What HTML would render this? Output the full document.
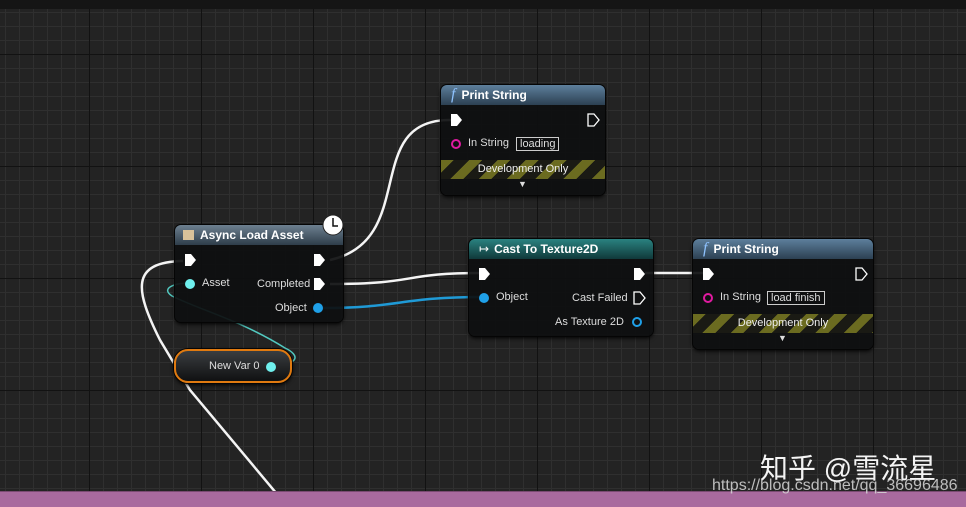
<!DOCTYPE html><html><head><meta charset="utf-8"><style>
body{margin:0;width:966px;height:506px;overflow:hidden;position:relative;font-family:"Liberation Sans",sans-serif;
background-color:#232323;
background-image:
linear-gradient(90deg,#121212 1px,transparent 1px),
linear-gradient(0deg,#121212 1px,transparent 1px),
linear-gradient(90deg,#2f2f2f 1px,transparent 1px),
linear-gradient(0deg,#2f2f2f 1px,transparent 1px);
background-size:112px 112px,112px 112px,14px 14px,14px 14px;
background-position:89px 55px,89px 55px,5px 55px,5px 55px;}
.top{position:absolute;left:0;top:0;width:966px;height:9px;background:#151515}
.pink{position:absolute;left:0;top:491px;width:966px;height:15px;background:#a86a9e;border-top:1px solid #7a4a72}
.node{position:absolute;background:rgba(14,15,16,.93);border-radius:6px;box-shadow:0 0 0 1px #050505,0 2px 4px #000;color:#ddd;font-size:11px}
.hd{height:20px;border-radius:6px 6px 0 0;color:#fff;font-weight:bold;font-size:12px;line-height:20px;padding-left:10px}
.hd i{font-size:16px;font-weight:normal}
.t{position:absolute;white-space:nowrap}
.stripe{position:absolute;left:0;right:0;height:19px;background:repeating-linear-gradient(135deg,#6b6b20 0 9px,#1a1a14 9px 20px);color:#eee;text-align:center;line-height:19px;font-size:11px}
.box{border:1px solid #ccc;padding:0 3px;font-size:11px}
</style></head><body>
<div class="top"></div>
<svg width="966" height="506" style="position:absolute;left:0;top:0">
<g fill="none" stroke-width="2.5">
<path d="M183 261 C130 262 135 290 160 340 L190 390 L287 506" stroke="#f4f4f4"/>
<path d="M330 260 C420 240 360 118 452 120" stroke="#f4f4f4"/>
<path d="M330 284 C420 284 400 273 482 273" stroke="#f4f4f4"/>
<path d="M645 273 L705 273" stroke="#f4f4f4"/>
<path d="M322 308 C400 308 400 297 482 297" stroke="#1f9ad6"/>
<path d="M272 365 C300 365 300 355 285 348 C240 320 200 310 172 296 C160 288 175 283 190 283" stroke="#52c9c0" stroke-width="1.5"/>
</g>
</svg>

<div class="node" style="left:441px;top:85px;width:164px;height:110px">
<div class="hd" style="background:linear-gradient(#5d7f9c,#2c4052)"><i style="color:#8fc3ff;font-family:'Liberation Serif';margin-right:6px">f</i>Print String</div>
<svg class="t" style="left:8px;top:28px" width="160" height="40"><path d="M2 1h6l5 6-5 6H2z" fill="#fff"/><path d="M139 1h6l5 6-5 6h-6z" fill="none" stroke="#fff" stroke-width="1.3"/><circle cx="7" cy="31" r="4" fill="none" stroke="#e01aa0" stroke-width="2"/></svg>
<span class="t" style="left:27px;top:52px">In String</span><span class="t box" style="left:75px;top:52px">loading</span>
<div class="stripe" style="top:75px">Development Only</div>
<span class="t" style="left:77px;top:94px;font-size:9px">▼</span>
</div>

<div class="node" style="left:175px;top:225px;width:168px;height:97px">
<div class="hd" style="background:linear-gradient(#6d8090,#2e3d4a);padding-left:8px"><span style="display:inline-block;width:11px;height:10px;background:#d9c29a;margin-right:6px;vertical-align:-1px"></span>Async Load Asset</div>
<svg class="t" style="left:8px;top:28px" width="160" height="60"><path d="M2 1h6l5 6-5 6H2z" fill="#fff"/><path d="M131 1h6l5 6-5 6h-6z" fill="#fff"/><path d="M131 25h6l5 6-5 6h-6z" fill="#fff"/><circle cx="7" cy="31" r="5" fill="#6ff0ee"/><circle cx="135" cy="55" r="5" fill="#1fa0e8"/></svg>
<span class="t" style="left:27px;top:52px">Asset</span>
<span class="t" style="left:82px;top:53px">Completed</span>
<span class="t" style="left:100px;top:77px">Object</span>
</div>

<div class="node" style="left:174px;top:349px;width:114px;height:30px;border:2px solid #e07a10;border-radius:14px;background:linear-gradient(#3a3d40,#101112)">
<span class="t" style="left:33px;top:9px">New Var 0</span>
<svg class="t" style="left:88px;top:9px" width="20" height="14"><circle cx="7" cy="7" r="5" fill="#6ff0ee"/></svg>
</div>

<div class="node" style="left:469px;top:239px;width:184px;height:97px">
<div class="hd" style="background:linear-gradient(#2a8280,#10393a)"><span style="font-weight:normal;margin-right:5px">↦</span>Cast To Texture2D</div>
<svg class="t" style="left:8px;top:28px" width="176" height="60"><path d="M2 1h6l5 6-5 6H2z" fill="#fff"/><path d="M157 1h6l5 6-5 6h-6z" fill="#fff"/><path d="M157 25h6l5 6-5 6h-6z" fill="none" stroke="#fff" stroke-width="1.3"/><circle cx="7" cy="31" r="5" fill="#1fa0e8"/><circle cx="160" cy="55" r="4" fill="none" stroke="#1fa0e8" stroke-width="2"/></svg>
<span class="t" style="left:27px;top:52px">Object</span>
<span class="t" style="left:103px;top:53px">Cast Failed</span>
<span class="t" style="left:86px;top:77px">As Texture 2D</span>
</div>

<div class="node" style="left:693px;top:239px;width:180px;height:110px">
<div class="hd" style="background:linear-gradient(#5d7f9c,#2c4052)"><i style="color:#8fc3ff;font-family:'Liberation Serif';margin-right:6px">f</i>Print String</div>
<svg class="t" style="left:8px;top:28px" width="176" height="40"><path d="M2 1h6l5 6-5 6H2z" fill="#fff"/><path d="M155 1h6l5 6-5 6h-6z" fill="none" stroke="#fff" stroke-width="1.3"/><circle cx="7" cy="31" r="4" fill="none" stroke="#e01aa0" stroke-width="2"/></svg>
<span class="t" style="left:27px;top:52px">In String</span><span class="t box" style="left:74px;top:52px">load finish</span>
<div class="stripe" style="top:75px">Development Only</div>
<span class="t" style="left:85px;top:94px;font-size:9px">▼</span>
</div>

<svg width="24" height="24" style="position:absolute;left:321px;top:213px">
<circle cx="12" cy="12" r="10" fill="#fff" stroke="#222"/>
<path d="M12 5 V13 H17" stroke="#111" stroke-width="1.5" fill="none"/>
</svg>

<div class="pink"></div>
<div class="t" style="left:760px;top:447px;color:#f4f4f4;font-size:28px;font-family:'Liberation Sans','Noto Sans CJK SC',sans-serif">知乎 @雪流星</div>
<div class="t" style="left:712px;top:477px;color:#d8d8d8;font-size:16px;opacity:.85">https://blog.csdn.net/qq_36696486</div>
</body></html>
